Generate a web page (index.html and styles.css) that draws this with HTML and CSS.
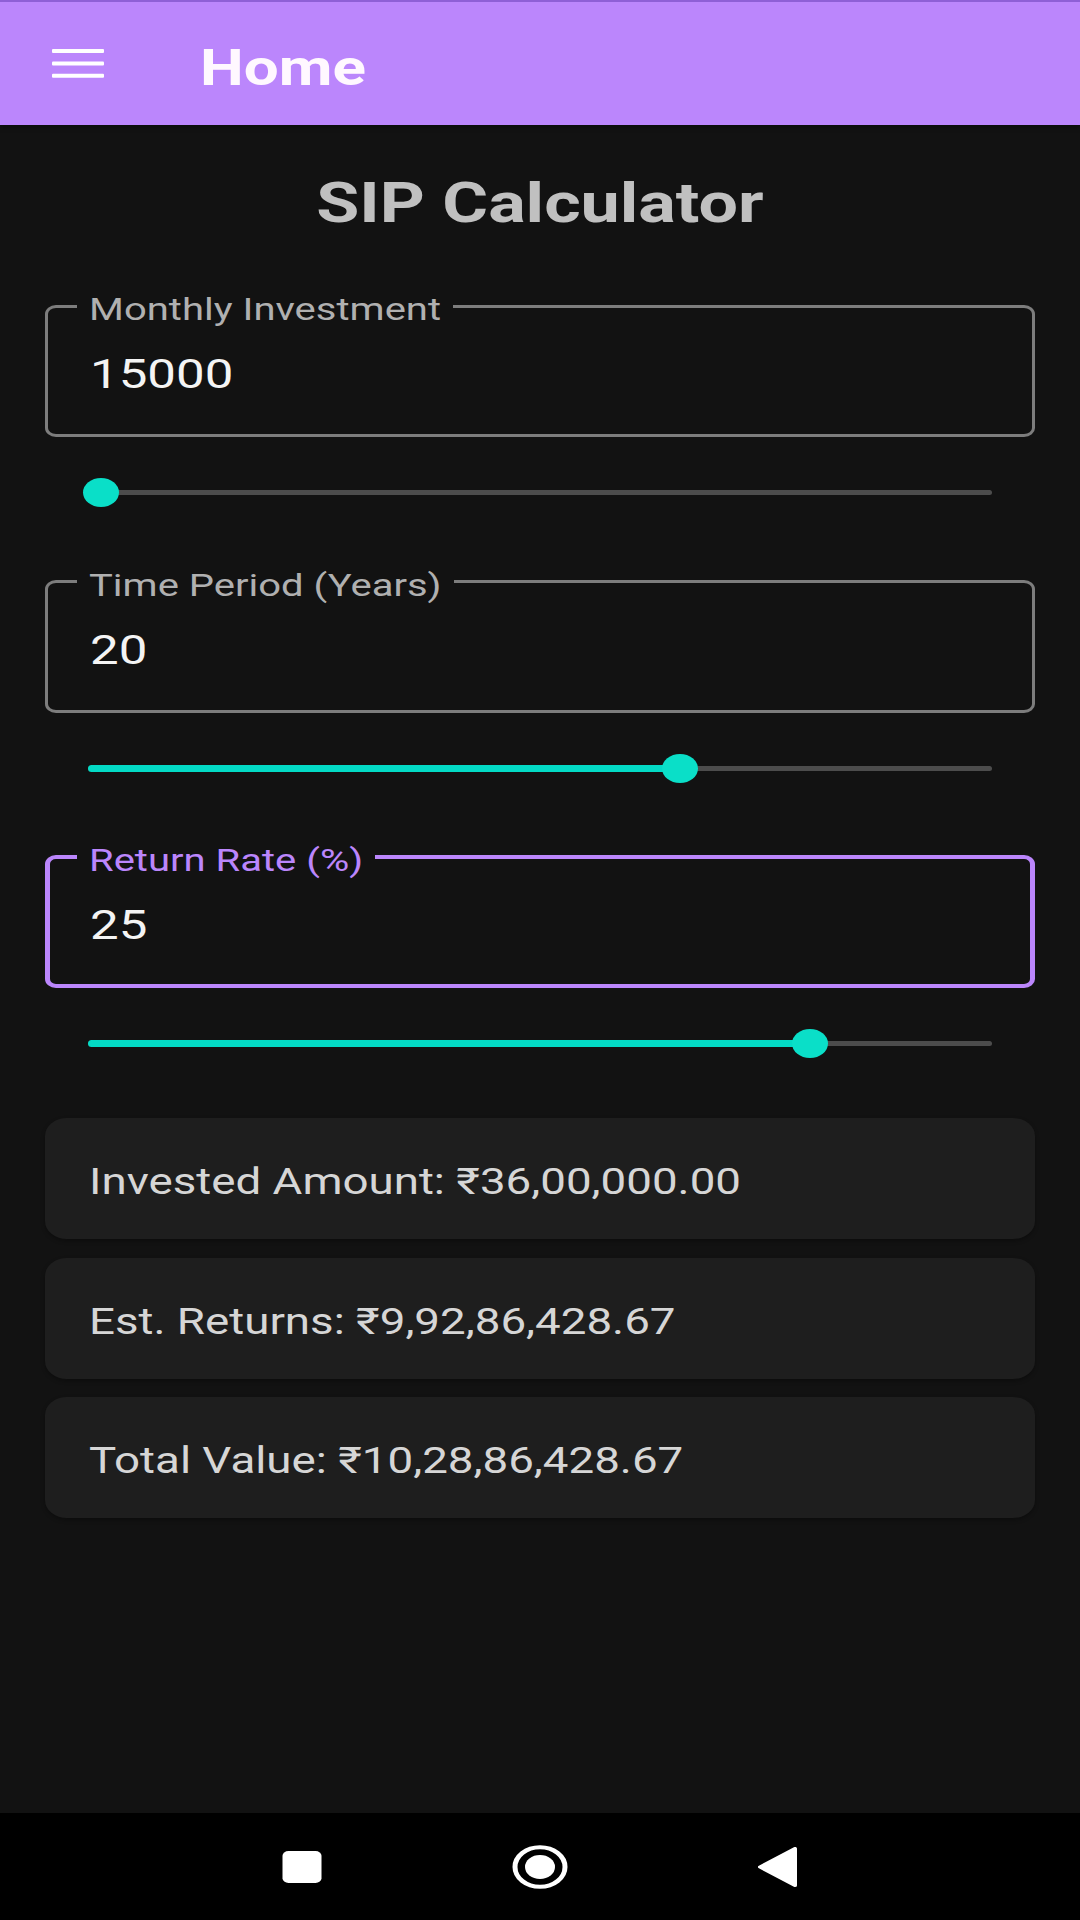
FILE: index.html
```html
<!DOCTYPE html>
<html>
<head>
  <meta charset="utf-8">
  <title>SIP Calculator</title>
  <link rel="stylesheet" href="styles.css">
</head>
<body>
  <div class="screen">
    <header class="app-bar">
      <svg class="menu-icon" width="52" height="29" viewBox="0 0 52 29">
        <rect x="0" y="0" width="52" height="4" rx="1"/>
        <rect x="0" y="12.4" width="52" height="4" rx="1"/>
        <rect x="0" y="24.8" width="52" height="4" rx="1"/>
      </svg>
      <h1 class="app-title">Home</h1>
    </header>

    <main class="content">
      <h2 class="page-title">SIP Calculator</h2>

      <fieldset class="field">
        <legend>Monthly Investment</legend>
        <div class="field-value">15000</div>
      </fieldset>
      <div class="slider">
        <div class="track">
          <div class="fill" style="width: 1.4%"></div>
          <div class="thumb" style="left: 1.4%"></div>
        </div>
      </div>

      <fieldset class="field">
        <legend>Time Period (Years)</legend>
        <div class="field-value">20</div>
      </fieldset>
      <div class="slider">
        <div class="track">
          <div class="fill" style="width: 65.5%"></div>
          <div class="thumb" style="left: 65.5%"></div>
        </div>
      </div>

      <fieldset class="field focused">
        <legend>Return Rate (%)</legend>
        <div class="field-value">25</div>
      </fieldset>
      <div class="slider">
        <div class="track">
          <div class="fill" style="width: 79.9%"></div>
          <div class="thumb" style="left: 79.9%"></div>
        </div>
      </div>

      <div class="results">
        <div class="result-card"><span>Invested Amount: ₹36,00,000.00</span></div>
        <div class="result-card"><span>Est. Returns: ₹9,92,86,428.67</span></div>
        <div class="result-card"><span>Total Value: ₹10,28,86,428.67</span></div>
      </div>
    </main>

    <nav class="nav-bar">
      <div class="nav-btn">
        <svg width="40" height="32" viewBox="0 0 40 40" preserveAspectRatio="none"><rect x="0.5" y="0" width="39" height="40" rx="6"/></svg>
      </div>
      <div class="nav-btn">
        <svg width="58" height="46" viewBox="0 0 58 58" preserveAspectRatio="none">
          <circle cx="29" cy="29" r="25" fill="none" stroke="#fff" stroke-width="5"/>
          <circle cx="29" cy="29" r="15"/>
        </svg>
      </div>
      <div class="nav-btn">
        <svg width="42" height="40" viewBox="0 0 42 50" preserveAspectRatio="none"><path d="M38 2 L38 48 L3 25 Z" stroke="#fff" stroke-width="4" stroke-linejoin="round"/></svg>
      </div>
    </nav>
  </div>
</body>
</html>
```

FILE: styles.css
```css
html,
body {
  margin: 0;
  width: 1080px;
  height: 1920px;
  overflow: hidden;
  background-color: #000000;
}

body {
  font-family: Roboto, "Noto Sans", "DejaVu Sans", sans-serif;
}

.screen {
  width: 1080px;
  height: 1920px;
  display: flex;
  flex-direction: column;
  background-color: #121212;
}

/* the capture is squeezed vertically, so glyphs get squeezed too */
.app-title,
.page-title,
.field legend,
.field-value,
.result-card span {
  transform: scaleY(0.8);
}

.app-bar {
  height: 125px;
  flex-shrink: 0;
  box-sizing: border-box;
  display: flex;
  align-items: center;
  padding-left: 52px;
  background-color: #bb86fc;
  border-top: 2px solid #8e5fd6;
  box-shadow: 0 2px 5px rgba(0, 0, 0, 0.45);
}

.menu-icon {
  fill: #ffffff;
}

.app-title {
  margin: 8px 0 0 96px;
  font-size: 62px;
  line-height: 59px;
  font-weight: 700;
  color: #fff8ff;
}

.content {
  flex: 1;
  padding: 0 45px;
}

.page-title {
  margin: 45px 0 49px;
  font-size: 70px;
  line-height: 67px;
  font-weight: 700;
  text-align: center;
  color: #c0c0c0;
}

.field {
  margin: 0;
  min-width: 0;
  padding: 0 42px 36px;
  border: 3px solid #7d7d7d;
  border-radius: 11px / 9px;
}

.field legend {
  margin-left: -13px;
  padding: 8px 12px 0;
  font-size: 40px;
  line-height: 32px;
  color: #b0b0b0;
}

.field.focused {
  padding: 0 40px 35px;
  border-width: 4px 5px;
  border-color: #bb86fc;
}

.field.focused legend {
  color: #bb86fc;
}

.field-value {
  margin-top: 24px;
  font-size: 51px;
  line-height: 48px;
  color: #f4f4f4;
}

.slider {
  margin: 3px 0 16px;
  height: 105.5px;
  padding: 0 43px;
  display: flex;
  align-items: center;
}

.track {
  position: relative;
  flex: 1;
  height: 5px;
  border-radius: 3px;
  background-color: #4c4c4c;
}

.fill {
  position: absolute;
  left: 0;
  top: -1px;
  height: 7px;
  border-radius: 4px;
  background-color: #03dac5;
}

.thumb {
  position: absolute;
  top: 50%;
  width: 36px;
  height: 29px;
  margin: -14.5px 0 0 -18px;
  border-radius: 50%;
  background-color: #0adfc8;
}

.results {
  margin-top: 21.5px;
  display: flex;
  flex-direction: column;
  gap: 18.5px;
}

.result-card {
  height: 121px;
  box-sizing: border-box;
  padding: 6px 0 0 44px;
  display: flex;
  align-items: center;
  background-color: #1e1e1e;
  border-radius: 22px / 18px;
  font-size: 45.7px;
  color: #d6d6d6;
  box-shadow: 0 2px 4px rgba(0, 0, 0, 0.3);
}

.result-card span {
  line-height: 43px;
}

.nav-bar {
  height: 107px;
  flex-shrink: 0;
  display: flex;
  justify-content: center;
  align-items: center;
  background-color: #000000;
}

.nav-btn {
  width: 238px;
  display: flex;
  justify-content: center;
  align-items: center;
  fill: #ffffff;
}
```
